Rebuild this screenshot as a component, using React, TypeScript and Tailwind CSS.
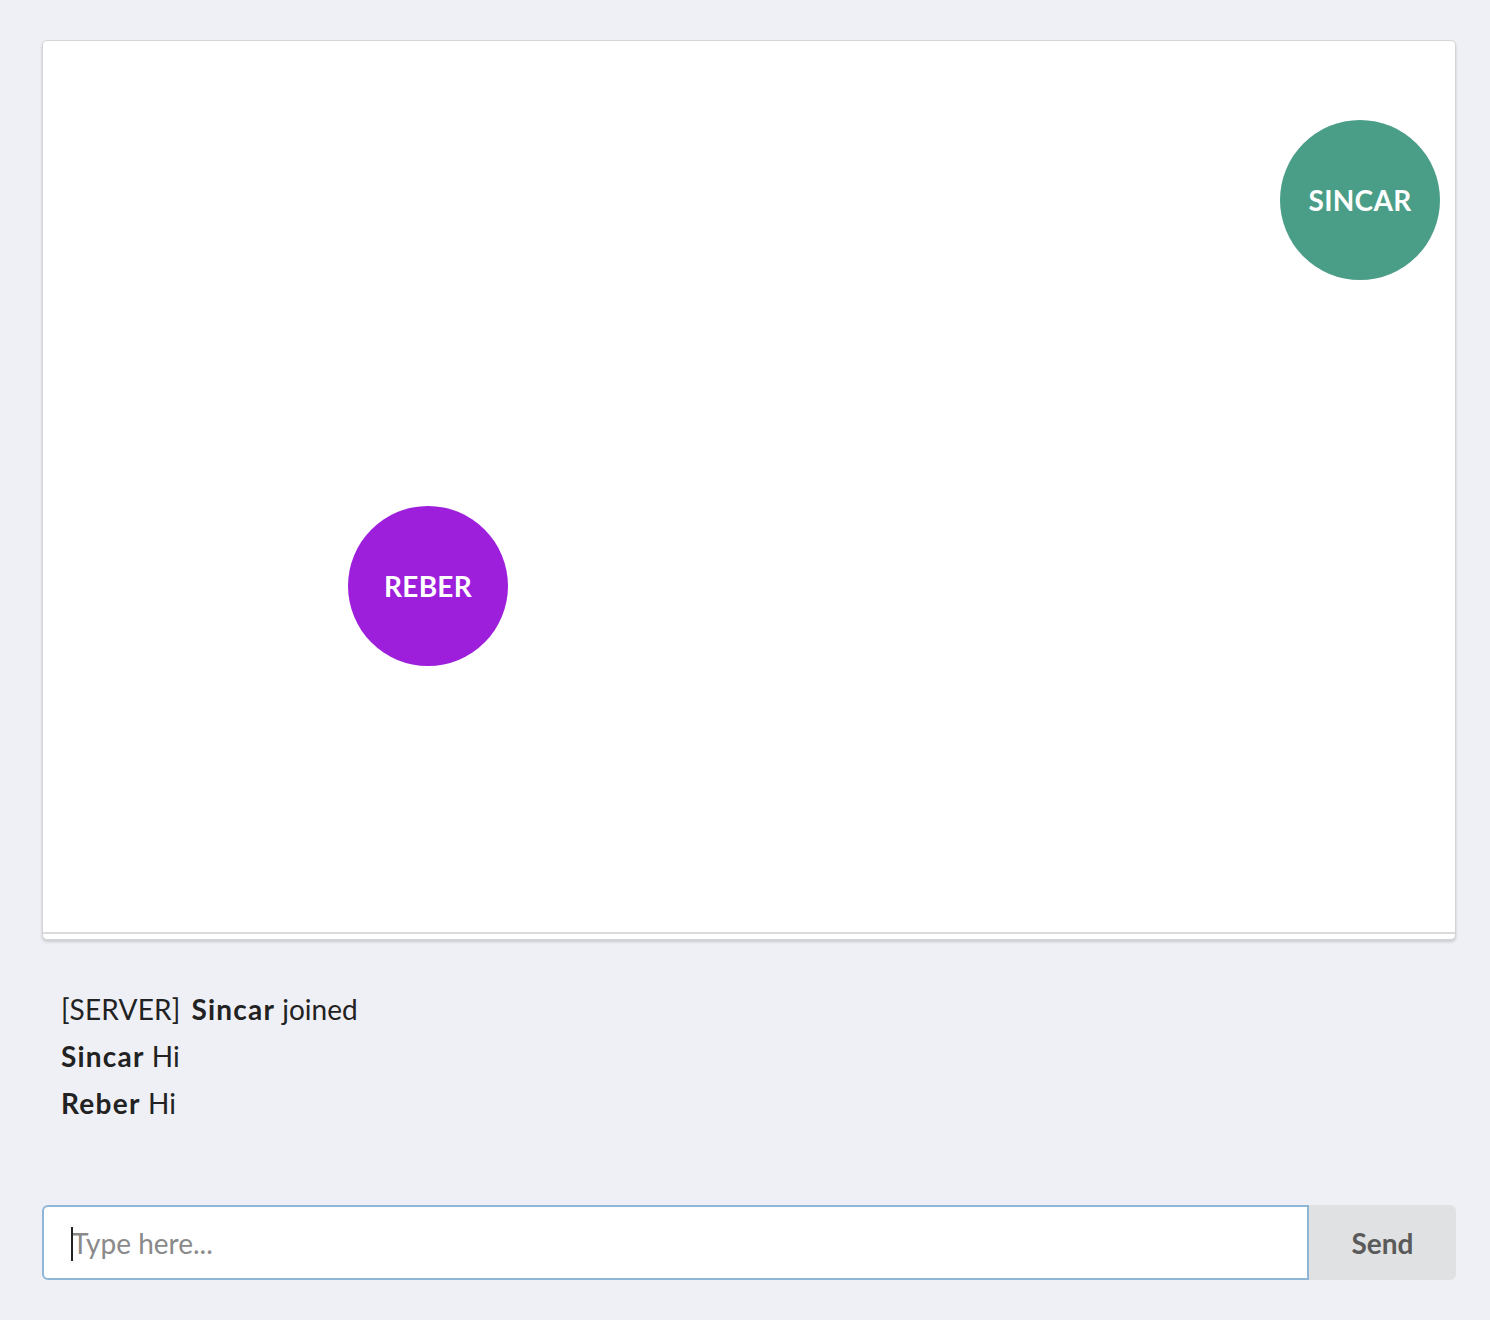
import React from "react";

export default function App() {
  return (
    <div
      className="min-h-[1320px] w-full bg-[#eff0f5] pt-[40px] pl-[42px] pr-[34px]"
      style={{ fontFamily: "Lato, 'Open Sans', sans-serif" }}
    >
      <div className="relative h-[900px] rounded-[5px] border border-[#d4d4d6] bg-white shadow-[0_2px_3px_0_rgba(34,36,38,0.18)]">
        <div className="h-[893px] border-b-2 border-[#dadadc]" />
        <div className="absolute left-[1237px] top-[79px] flex h-[160px] w-[160px] items-center justify-center rounded-full bg-[#4a9e87] text-[28px] font-bold tracking-[0.3px] text-white">
          SINCAR
        </div>
        <div className="absolute left-[305px] top-[465px] flex h-[160px] w-[160px] items-center justify-center rounded-full bg-[#9d1fdc] text-[28px] font-bold tracking-[0.3px] text-white">
          REBER
        </div>
      </div>

      <div className="mt-[46px] pl-[19px] text-[28px] leading-[47px] text-[#222222]">
        <div>
          <span className="tracking-[0.2px]">[SERVER]</span>
          <span className="ml-[11px] font-bold tracking-[1.2px]">Sincar</span> joined
        </div>
        <div>
          <span className="font-bold tracking-[1.2px]">Sincar</span> Hi
        </div>
        <div>
          <span className="font-bold tracking-[1.3px]">Reber</span> Hi
        </div>
      </div>

      <div className="mt-[78px] flex h-[75px]">
        <div className="relative flex-1">
          <input
            type="text"
            placeholder="Type here..."
            className="h-full w-full rounded-l-[6px] border-2 border-[#8fb6d6] bg-white pl-[28px] text-[28px] text-[#222] outline-none placeholder:text-[#8a8a8a]"
            style={{ fontFamily: "Lato, 'Open Sans', sans-serif" }}
          />
          <span className="pointer-events-none absolute left-[29px] top-[22px] h-[34px] w-[2px] bg-[#222]" />
        </div>
        <button
          className="w-[147px] rounded-r-[6px] bg-[#e0e1e2] text-[28px] font-bold text-[#5a5a5a]"
          style={{ fontFamily: "Lato, 'Open Sans', sans-serif" }}
        >
          Send
        </button>
      </div>
    </div>
  );
}
